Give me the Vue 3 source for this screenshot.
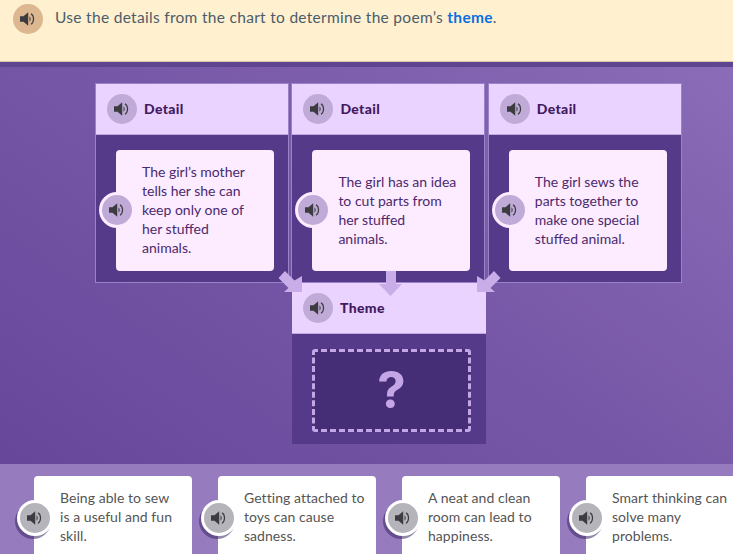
<script setup>
import { h } from 'vue'

const SpeakerIcon = () =>
  h('svg', { viewBox: '0 0 16 14', class: 'icon' }, [
    h('path', { d: 'M0 4.300h3.500L8.200.2v13.600L3.500 9.700H0z' }),
    h('path', { d: 'M9.500 4.200c1.600 1.400 1.600 4.200 0 5.600z' }),
    h('path', { d: 'M11 1.800c3.400 2.200 3.400 8.200 0 10.400', fill: 'none', stroke: '#3c3c40', 'stroke-width': '1.200' })
  ])

const details = [
  ['The girl’s mother', 'tells her she can', 'keep only one of', 'her stuffed', 'animals.'],
  ['The girl has an idea', 'to cut parts from', 'her stuffed', 'animals.'],
  ['The girl sews the', 'parts together to', 'make one special', 'stuffed animal.']
]
const answers = [
  ['Being able to sew', 'is a useful and fun', 'skill.'],
  ['Getting attached to', 'toys can cause', 'sadness.'],
  ['A neat and clean', 'room can lead to', 'happiness.'],
  ['Smart thinking can', 'solve many', 'problems.']
]
</script>

<template>
  <div class="page">
    <header class="banner">
      <span class="speaker tan"><SpeakerIcon /></span>
      <p>Use the details from the chart to determine the poem’s <b>theme</b>.</p>
    </header>

    <main class="chart">
      <div class="columns">
        <section v-for="(lines, i) in details" :key="i" class="column">
          <div class="head">
            <span class="speaker lilac"><SpeakerIcon /></span>
            <h2>Detail</h2>
          </div>
          <div class="body">
            <div class="card">
              <span class="speaker lilac ringed"><SpeakerIcon /></span>
              <div class="lines">
                <div v-for="l in lines" :key="l">{{ l }}</div>
              </div>
            </div>
          </div>
        </section>
      </div>

      <section class="theme">
        <svg class="arrow left" viewBox="0 0 24 22"><path d="M.5 7 7 0l9.500 9.500L24 5v16H6l4.500-4z" /></svg>
        <svg class="arrow mid" viewBox="0 0 23 25"><path d="M7 0h10v13h6L11.500 25 0 13h7z" /></svg>
        <svg class="arrow right" viewBox="0 0 24 22"><path d="M23.500 7 17 0 7.500 9.500 0 5v16h18l-4.500-4z" /></svg>
        <div class="head">
          <span class="speaker lilac"><SpeakerIcon /></span>
          <h2>Theme</h2>
        </div>
        <div class="body drop-wrap">
          <div class="drop">?</div>
        </div>
      </section>
    </main>

    <footer class="tray">
      <article v-for="(lines, i) in answers" :key="i" class="answer">
        <span class="speaker grey"><SpeakerIcon /></span>
        <div v-for="l in lines" :key="l">{{ l }}</div>
      </article>
    </footer>
  </div>
</template>

<style>
html, body { margin: 0; overflow: hidden; }
.icon { width: 16px; height: 14px; fill: #3c3c40; display: block; }
</style>

<style scoped>
.page {
  width: 733px;
  height: 554px;
  overflow: hidden;
  display: flex;
  flex-direction: column;
  font-family: Lato, "Open Sans", sans-serif;
}
.banner {
  height: 62px;
  flex: none;
  box-sizing: border-box;
  background: #fff0cf;
  border-bottom: 1px solid #d9c4a6;
  display: flex;
  align-items: flex-start;
  padding: 4px 0 0 13px;
  gap: 12px;
}
.banner p {
  margin: 0;
  padding-top: 3px;
  font-size: 15.5px;
  line-height: 20px;
  letter-spacing: 0.3px;
  color: #4b5d6b;
}
.banner b { color: #0a6fe0; font-weight: 700; }
.chart {
  height: 402px;
  flex: none;
  box-sizing: border-box;
  border-top: 5px solid #5f4590;
  padding: 16px 0 0 95px;
  background: linear-gradient(35deg, #67479a 0%, #7656a6 50%, #8a6cb8 100%);
}
.columns { display: flex; gap: 2.4px; }
.column {
  width: 194px;
  height: 200px;
  box-sizing: border-box;
  border: 1px solid #9a82c6;
  background: #563a8a;
}
.head {
  height: 51px;
  box-sizing: border-box;
  display: flex;
  align-items: center;
  gap: 7px;
  padding-left: 11px;
  background: #ead4ff;
  border-bottom: 1px solid #bfa8dd;
}
h2 {
  margin: -2px 0 0;
  font-size: 14px;
  font-weight: 900;
  color: #43195f;
  letter-spacing: 0.35px;
}
.body {
  height: 147px;
  box-sizing: border-box;
  padding: 15px 14px 11px 20px;
  display: flex;
}
.card {
  position: relative;
  flex: 1;
  display: flex;
  align-items: center;
  background: #fdebff;
  border-radius: 4px;
  padding-left: 26px;
  font-size: 14px;
  line-height: 19px;
  color: #4a2a6d;
}
.lines { margin-top: -2px; }
.speaker {
  width: 30px;
  height: 30px;
  flex: none;
  border-radius: 50%;
  display: flex;
  align-items: center;
  justify-content: center;
}
.tan { background: #dcb78f; }
.lilac { background: #c0abd8; }
.ringed {
  position: absolute;
  left: -17px;
  top: 42px;
  box-sizing: content-box;
  border: 3px solid #fdebff;
}
.grey {
  position: absolute;
  left: -17px;
  top: 24px;
  background: #b4b4ba;
  border: 3px solid #fff;
  box-shadow: -2px 3px 0 rgba(60, 40, 100, 0.55);
}
.theme {
  position: relative;
  width: 194px;
  height: 161px;
  margin: 0 0 0 197px;
  background: #563a8a;
}
.arrow { position: absolute; fill: #c9ade9; z-index: 2; }
.left { width: 24px; height: 22px; left: -14px; top: -12px; }
.mid { width: 23px; height: 25px; left: 87px; top: -12px; }
.right { width: 24px; height: 22px; left: 185px; top: -12px; }
.drop-wrap { height: 110px; padding: 15px 15px 12px 20px; }
.drop {
  flex: 1;
  box-sizing: border-box;
  padding-bottom: 3px;
  background: #452e76;
  border: 3px dashed #c4a5e6;
  border-radius: 3px;
  display: flex;
  align-items: center;
  justify-content: center;
  font-family: Inter, Lato, sans-serif;
  font-size: 51px;
  line-height: 1;
  font-weight: 700;
  color: #c4a5e6;
}
.tray {
  flex: 1;
  display: flex;
  gap: 26px;
  padding: 12px 0 0 34px;
  background: #967cbf;
  overflow: hidden;
}
.answer {
  position: relative;
  flex: none;
  width: 158px;
  height: 90px;
  box-sizing: border-box;
  padding: 12px 0 0 26px;
  background: #fff;
  border-radius: 4px 4px 0 0;
  font-size: 14px;
  line-height: 19px;
  letter-spacing: 0.05px;
  color: #555;
  white-space: nowrap;
}
</style>
